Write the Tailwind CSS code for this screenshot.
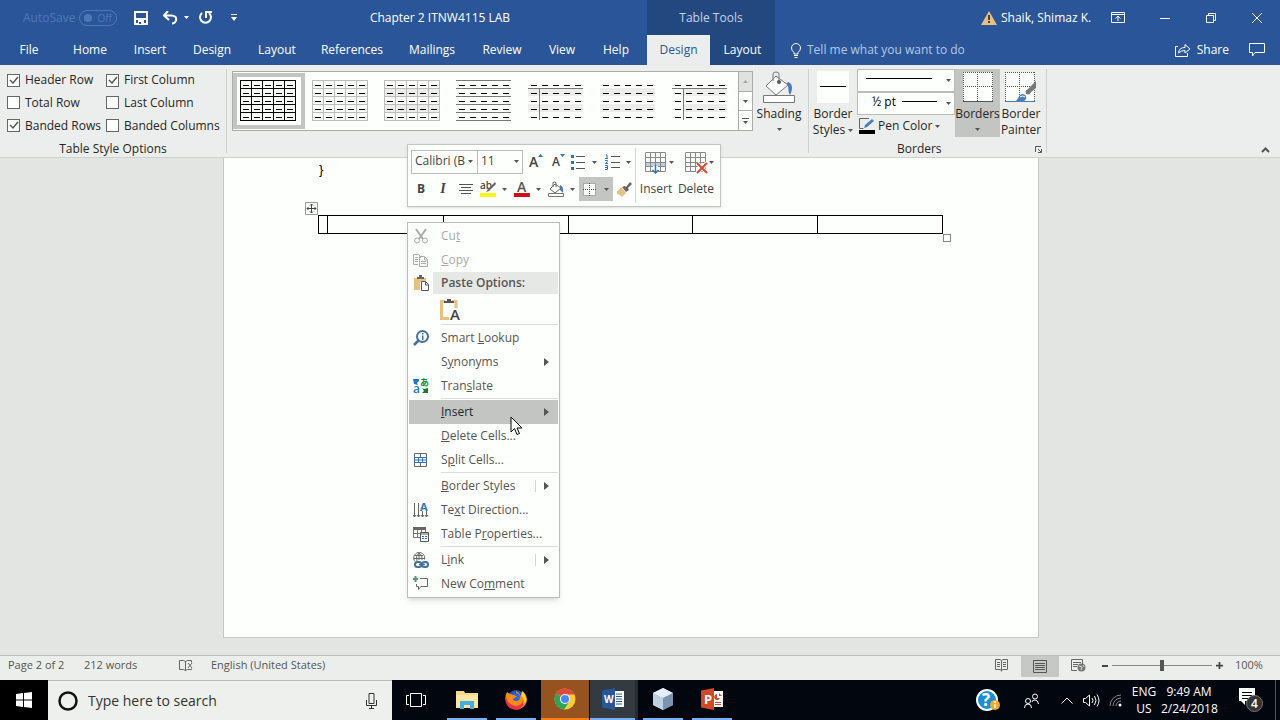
<!DOCTYPE html>
<html lang="en">

<head>
    <meta charset="UTF-8">
    <meta name="viewport" content="width=device-width, initial-scale=1.0">
    <title>Chapter 2 ITNW4115 LAB</title>
    <script src="https://cdn.jsdelivr.net/npm/@tailwindcss/browser@4"></script>
</head>

<body class="min-h-screen flex flex-col bg-[#e3e5e3] font-['Open_Sans','Noto_Sans',sans-serif] text-xs text-[#262626] whitespace-nowrap">

    <!-- Shared icons -->
    <svg class="hidden">
        <symbol id="caret" viewBox="0 0 5 3"><path d="M0 0h5L2.500 3z" fill="#555" /></symbol>
        <symbol id="arrow-right" viewBox="0 0 5 8"><path d="M0 0l5 4-5 4z" fill="#555" /></symbol>
        <symbol id="dashes" viewBox="0 0 56 41">
            <path d="M3 5.500h52M3 13.500h52M3 21.500h52M3 29.500h52M3 37.500h52" stroke="#000" stroke-dasharray="6 5" fill="none" />
        </symbol>
        <symbol id="grid" viewBox="0 0 56 41">
            <path d="M0 .5h56M0 8.500h56M0 16.500h56M0 24.500h56M0 32.500h56M0 40.500h56M.5 0v41M11.500 0v41M22.500 0v41M33.500 0v41M44.500 0v41M55.500 0v41" stroke="currentColor" fill="none" />
        </symbol>
        <symbol id="bucket" viewBox="0 0 32 33">
            <path d="M25 11c5 1 5 8 2 13-3-4 0-9-4-11z" fill="#4a7ebb" />
            <path d="M13 5L3 15l10 9 12-10z" fill="#fff" stroke="#777" />
            <path d="M10 10V3q0-2 3-2t3 2v8" fill="none" stroke="#777" />
            <circle cx="16" cy="11" r="2" fill="#555" />
            <path d="M.5 24.500h31v7H.5z" fill="#fff" stroke="#777" />
        </symbol>
        <symbol id="border-grid" viewBox="0 0 30 30">
            <path d="M0 0h30v30H0z" fill="#fdfffc" />
            <path d="M0 .5h30M0 29.500h30M.5 0v30M29.500 0v30M14.500 0v30M0 14.500h30" fill="none" stroke="#555" stroke-dasharray="1 1" />
        </symbol>
    </svg>

    <!-- Title bar -->
    <header class="bg-[#2a5699] text-white">
        <div class="flex h-[35px] items-center">
            <label class="flex w-[124px] items-center gap-1 pl-[23px] text-[#4d78b8]">AutoSave
                <button class="flex h-4 w-[38px] shrink-0 items-center gap-[5px] rounded-full border border-[#4d78b8] pl-1 text-[10px] leading-3"><span class="size-2 shrink-0 rounded-full bg-[#4d78b8]"></span>Off</button>
            </label>
            <div class="flex w-[204px] items-center pl-[10px]">
                <button aria-label="Save"><svg class="size-[14px]" viewBox="0 0 14 14"><path d="M1 1h12v12H1zM1 8h12" fill="none" stroke="#fff" stroke-width="2" /><path d="M4 9h6v4H4z" fill="#fff" /><path d="M5 11h2v2H5z" fill="#2a5699" /></svg></button>
                <button class="ml-[15px] flex items-center gap-[6px]" aria-label="Undo"><svg class="h-[14px] w-[15px]" viewBox="0 0 15 14"><path d="M5 0L1 4.500 6 9M1 4.500h7q6 0 5 5-1 3-4 3" fill="none" stroke="#fff" stroke-width="2" /></svg><svg class="h-[3px] w-[5px]" viewBox="0 0 5 3"><path d="M0 0h5L2.500 3z" fill="#fff" /></svg></button>
                <button class="ml-[9px]" aria-label="Repeat"><svg class="size-[15px]" viewBox="0 0 15 15"><path d="M4 3a5.500 5.500 0 1 0 7 0M8 8V2h6" fill="none" stroke="#fff" stroke-width="2" /></svg></button>
                <button class="ml-[18px]" aria-label="Customize"><svg class="h-[7px] w-[6px]" viewBox="0 0 6 7"><path d="M0 0h6v1H0zM0 3h6L3 7z" fill="#fff" /></svg></button>
            </div>
            <h1 class="w-[224px] text-center">Chapter 2 ITNW4115 LAB</h1>
            <div class="ml-[95px] flex h-full w-32 items-center justify-center bg-[#23487f] text-[#c3d2e9]">Table Tools</div>
            <div class="ml-auto flex items-center">
                <svg class="h-[14px] w-[16px]" viewBox="0 0 16 14"><path d="M8 0l8 14H0z" fill="#e8c07f" /><path d="M7 4h2v5H7zM7 10h2v2H7z" fill="#444" /></svg>
                <span class="ml-1 w-[110px]">Shaik, Shimaz K.</span>
                <button aria-label="Ribbon options"><svg class="h-[11px] w-[14px]" viewBox="0 0 14 11"><path d="M.5 .5h13v10H.5zM.5 2.500h13M7 9V4M4.500 6.500L7 4l2.500 2.500" fill="none" stroke="#fff" /></svg></button>
                <button class="ml-[35px]" aria-label="Minimize"><svg class="size-[10px]" viewBox="0 0 10 10"><path d="M0 5.500h10" stroke="#fff" /></svg></button>
                <button class="ml-9" aria-label="Restore"><svg class="size-[10px]" viewBox="0 0 10 10"><path d="M.5 2.500h7v7h-7zM2.500 2V.5h7v7H8" fill="none" stroke="#fff" /></svg></button>
                <button class="ml-9 mr-[18px]" aria-label="Close"><svg class="size-[10px]" viewBox="0 0 10 10"><path d="M0 0l10 10M10 0L0 10" stroke="#fff" /></svg></button>
            </div>
        </div>

        <!-- Tabs -->
        <nav class="flex h-[30px] items-stretch">
            <button class="w-[58px]">File</button>
            <button class="w-16">Home</button>
            <button class="w-14">Insert</button>
            <button class="w-[68px]">Design</button>
            <button class="w-[62px]">Layout</button>
            <button class="w-[88px]">References</button>
            <button class="w-[72px]">Mailings</button>
            <button class="w-[68px]">Review</button>
            <button class="w-[52px]">View</button>
            <button class="w-14">Help</button>
            <button class="ml-[3px] w-[63px] bg-[#eceeed] text-[#2a5699]">Design</button>
            <button class="w-[65px] bg-[#23487f]">Layout</button>
            <label class="flex items-center gap-[6px] pl-4">
                <svg class="h-[15px] w-[10px]" viewBox="0 0 10 15"><path d="M3 11V9.500Q.5 7.500.5 5a4.500 4.500 0 0 1 9 0Q9.500 7.500 7 9.500V11zM3 12.500h4M3.500 14.500h3" fill="none" stroke="#fff" /></svg>
                <input type="text" class="w-44 outline-none placeholder:text-[#b4c8e6] placeholder:opacity-100" placeholder="Tell me what you want to do">
            </label>
            <button class="ml-auto flex items-center gap-[6px]"><svg class="h-[14px] w-4" viewBox="0 0 16 14"><path d="M3 3.500H.5v10h12V10M3.500 10Q4 4.500 10 4.500V1.500l5 4.500-5 4V7.500Q6 7.500 3.500 10z" fill="none" stroke="#fff" /></svg>Share</button>
            <button class="ml-5 mr-[15px]" aria-label="Comments"><svg class="h-[14px] w-4" viewBox="0 0 16 14"><path d="M.5 .5h15v9H6L3.500 13V9.500h-3z" fill="none" stroke="#fff" /></svg></button>
        </nav>
    </header>

    <!-- Ribbon -->
    <section class="flex h-[93px] border-b border-[#cfd1cf] bg-[#eceeed] py-1">
        <div class="flex w-[227px] flex-col border-r border-[#cfd1cf]">
            <div class="grid h-[68px] shrink-0 grid-cols-[99px_1fr] pl-[7px]">
                <label class="flex items-center gap-[5px]"><span class="relative"><input type="checkbox" checked class="peer block size-[13px] appearance-none border border-[#666] bg-[#fdfffc]"><svg class="pointer-events-none absolute inset-0 hidden size-[13px] peer-checked:block" viewBox="0 0 13 13"><path d="M3 6l3 3 5-6" fill="none" stroke="#555" stroke-width="1.500" /></svg></span>Header Row</label>
                <label class="flex items-center gap-[5px]"><span class="relative"><input type="checkbox" checked class="peer block size-[13px] appearance-none border border-[#666] bg-[#fdfffc]"><svg class="pointer-events-none absolute inset-0 hidden size-[13px] peer-checked:block" viewBox="0 0 13 13"><path d="M3 6l3 3 5-6" fill="none" stroke="#555" stroke-width="1.500" /></svg></span>First Column</label>
                <label class="flex items-center gap-[5px]"><input type="checkbox" class="size-[13px] appearance-none border border-[#666] bg-[#fdfffc]">Total Row</label>
                <label class="flex items-center gap-[5px]"><input type="checkbox" class="size-[13px] appearance-none border border-[#666] bg-[#fdfffc]">Last Column</label>
                <label class="flex items-center gap-[5px]"><span class="relative"><input type="checkbox" checked class="peer block size-[13px] appearance-none border border-[#666] bg-[#fdfffc]"><svg class="pointer-events-none absolute inset-0 hidden size-[13px] peer-checked:block" viewBox="0 0 13 13"><path d="M3 6l3 3 5-6" fill="none" stroke="#555" stroke-width="1.500" /></svg></span>Banded Rows</label>
                <label class="flex items-center gap-[5px]"><input type="checkbox" class="size-[13px] appearance-none border border-[#666] bg-[#fdfffc]">Banded Columns</label>
            </div>
            <div class="text-center leading-6">Table Style Options</div>
        </div>

        <div class="flex w-[582px] border-r border-[#cfd1cf] pl-[5px]">
            <!-- Table styles gallery -->
            <div class="mt-[2px] flex h-[60px] w-[521px] border border-[#aaacaa] bg-[#fdfffc]">
                <button class="my-px flex w-[72px] border-4 border-[#c3c5c3] pt-[3px] pl-[3px]" aria-label="Table Grid"><svg class="h-[41px] w-14 text-black"><use href="#grid" /><use href="#dashes" /></svg></button>
                <button class="flex w-[72px] pt-2 pl-[7px]" aria-label="Table Grid Light"><svg class="h-[41px] w-14 text-[#bbb]"><use href="#grid" /><use href="#dashes" /></svg></button>
                <button class="flex w-[72px] pt-2 pl-[7px]" aria-label="Plain Table 1"><svg class="h-[41px] w-14 text-[#bbb]"><path d="M0 8h56v8H0zM0 24h56v8H0z" fill="#ededed" /><use href="#grid" /><use href="#dashes" /></svg></button>
                <button class="flex w-[72px] pt-2 pl-[7px]" aria-label="Plain Table 2"><svg class="h-[41px] w-14"><path d="M0 .5h55M0 8.500h55M0 16.500h55M0 24.500h55M0 32.500h55M0 40.500h55" stroke="#777" /><use href="#dashes" /></svg></button>
                <button class="flex w-[72px] pt-2 pl-[7px]" aria-label="Plain Table 3"><svg class="h-[41px] w-14"><path d="M0 8h55v8H0zM0 24h55v8H0z" fill="#ededed" /><path d="M0 8.500h55M11.500 8v32" stroke="#777" /><use href="#dashes" /></svg></button>
                <button class="flex w-[72px] pt-2 pl-[7px]" aria-label="Plain Table 4"><svg class="h-[41px] w-14"><path d="M0 8h55v8H0zM0 24h55v8H0z" fill="#ededed" /><use href="#dashes" /></svg></button>
                <button class="flex w-[73px] pt-2 pl-[7px]" aria-label="Plain Table 5"><svg class="h-[41px] w-14"><path d="M12 8h43v8H12zM12 24h43v8H12z" fill="#ededed" /><path d="M0 8.500h55M11.500 8v32" stroke="#777" /><use href="#dashes" /></svg></button>
                <div class="flex w-[14px] flex-col divide-y divide-[#aaacaa] border-l border-[#aaacaa]">
                    <button class="flex flex-1 items-center justify-center bg-[#e0e2e0]" aria-label="Up"><svg class="h-[3px] w-[5px]" viewBox="0 0 5 3"><path d="M0 3h5L2.500 0z" fill="#aaa" /></svg></button>
                    <button class="flex flex-1 items-center justify-center" aria-label="Down"><svg class="h-[3px] w-[5px]"><use href="#caret" /></svg></button>
                    <button class="flex flex-1 flex-col items-center justify-center gap-[2px]" aria-label="More"><span class="h-px w-[7px] bg-[#555]"></span><svg class="h-[3px] w-[5px]"><use href="#caret" /></svg></button>
                </div>
            </div>
            <button class="flex h-[69px] w-[52px] flex-col items-center pt-[2px] leading-4"><svg class="mb-[2px] h-[33px] w-8 shrink-0"><use href="#bucket" /></svg>Shading<svg class="mt-[6px] h-[3px] w-[5px]"><use href="#caret" /></svg></button>
        </div>

        <div class="flex w-[238px] flex-col border-r border-[#cfd1cf]">
            <div class="flex h-[68px] shrink-0">
                <button class="flex w-12 flex-col items-center pt-[2px] leading-4">
                    <svg class="mb-[3px] size-8 shrink-0 bg-[#fdfffc]"><path d="M3 15.500h26" stroke="#000" /></svg>
                    <span>Border</span>
                    <span class="flex items-center gap-[3px]">Styles <svg class="h-[3px] w-[5px]"><use href="#caret" /></svg></span>
                </button>
                <div class="flex w-[98px] flex-col">
                    <div class="relative h-[23px]"><select aria-label="Line Style" class="h-full w-full appearance-none border border-[#bbbdbb] bg-[#fdfffc]"><option></option></select>
                        <svg class="pointer-events-none absolute top-[9px] left-[9px] h-px w-[66px] bg-black"></svg><svg class="pointer-events-none absolute top-[10px] right-1 h-[3px] w-[5px]"><use href="#caret" /></svg></div>
                    <div class="relative h-[23px]"><select aria-label="Line Weight" class="h-full w-full appearance-none border border-[#bbbdbb] bg-[#fdfffc] pb-[3px] pl-[14px] text-black"><option>½ pt</option></select>
                        <svg class="pointer-events-none absolute top-[9px] left-[45px] h-px w-[35px] bg-black"></svg><svg class="pointer-events-none absolute top-[10px] right-1 h-[3px] w-[5px]"><use href="#caret" /></svg></div>
                    <button class="flex h-[22px] items-center gap-[3px] pl-[2px]"><svg class="size-4 shrink-0" viewBox="0 0 16 16"><path d="M10 .5H.5v10h4" fill="none" stroke="#666" /><path d="M5 10l1-3 7-6 2 2-7 6z" fill="#4a7ebb" /><path d="M0 12h16v4H0z" fill="#000" /></svg>Pen Color <svg class="h-[3px] w-[5px]"><use href="#caret" /></svg></button>
                </div>
                <button class="flex w-[45px] flex-col items-center bg-[#c3c5c3] pt-[3px] leading-4"><svg class="mb-1 size-[30px] shrink-0"><use href="#border-grid" /><path d="M0 29.500h30" stroke="#555" /></svg>Borders<svg class="mt-[6px] h-[3px] w-[5px]"><use href="#caret" /></svg></button>
                <button class="flex w-[42px] flex-col items-center pt-[3px] leading-4">
                    <svg class="mb-1 h-[30px] w-8 shrink-0" viewBox="0 0 32 30"><svg width="30" height="30"><use href="#border-grid" /></svg><path d="M0 29.500h30" stroke="#4a7ebb" /><path d="M31 9v7l-6 5-3-3z" fill="#777" /><circle cx="23" cy="20" r="2.500" fill="#777" /><path d="M9 30c5-2 4-8 9-8 5 1 4 8-2 8z" fill="#4a7ebb" /><path d="M15 25q3-2 5 0" stroke="#fff" fill="none" /></svg>
                    <span>Border</span><span>Painter</span>
                </button>
            </div>
            <div class="flex items-center justify-between pr-[4px] pl-[88px] leading-6">Borders
                <button aria-label="Borders settings"><svg class="size-[7px]" viewBox="0 0 7 7"><path d="M.5 6V.5H6M3 3l3 3M6.500 3v3.500H3" fill="none" stroke="#555" /></svg></button>
            </div>
        </div>
        <button class="mt-auto mr-[10px] ml-auto" aria-label="Collapse ribbon"><svg class="h-[6px] w-[9px]" viewBox="0 0 9 6"><path d="M1 5l3.500-3.500L8 5" fill="none" stroke="#555" stroke-width="2" /></svg></button>
    </section>

    <!-- Document -->
    <main class="flex flex-1 justify-center pr-[18px] pb-[17px]">
        <article class="relative w-[816px] border-x border-b border-[#c6c8c6] bg-[#fdfffc] px-[95px] pt-1">
            <p class="font-['Liberation_Sans',sans-serif] text-[13px] leading-4 text-black">}</p>
            <table class="mt-[37px] h-[19px] w-[625px] table-fixed border-collapse -ml-px">
                <tr>
                    <td class="w-[9px] border border-black"></td>
                    <td class="w-[116px] border border-black"></td>
                    <td class="w-[125px] border border-black"></td>
                    <td class="w-[124px] border border-black"></td>
                    <td class="w-[125px] border border-black"></td>
                    <td class="border border-black"></td>
                </tr>
            </table>
            <!-- table handles -->
            <svg class="absolute top-[44px] left-[81px] size-[13px]" viewBox="0 0 13 13"><path d="M.5 .5h12v12H.5z" fill="#fff" stroke="#999" /><path d="M6.500 2v9M2 6.500h9M5 3.500l1.500-1.500L8 3.500M5 9.500L6.500 11 8 9.500M3.500 5L2 6.500 3.500 8M9.500 5L11 6.500 9.500 8" fill="none" stroke="#444" /></svg>
            <span class="absolute top-[76px] left-[719px] size-2 border border-[#888] bg-white"></span>

            <!-- Mini toolbar -->
            <div class="absolute -top-[14px] left-[183px] flex h-[63px] w-[314px] border border-[#c3c5c3] bg-[#fdfffc] text-[#444] shadow-sm">
                <div class="w-[227px] pt-[5px]">
                    <div class="flex h-6 items-center pl-[3px]">
                        <div class="relative"><select aria-label="Font" class="block h-6 w-[67px] appearance-none border border-[#bbbdbb] pb-[2px] pl-[3px]"><option>Calibri (B</option></select><svg class="pointer-events-none absolute top-[10px] right-[5px] h-[3px] w-[5px]"><use href="#caret" /></svg></div>
                        <div class="relative -ml-px"><select aria-label="Font Size" class="block h-6 w-[46px] appearance-none border border-[#bbbdbb] pb-[2px] pl-[3px]"><option>11</option></select><svg class="pointer-events-none absolute top-[10px] right-[4px] h-[3px] w-[5px]"><use href="#caret" /></svg></div>
                        <button class="ml-[6px] flex w-5 text-sm leading-6 font-semibold">A<svg class="mt-1 h-[3px] w-[5px]" viewBox="0 0 5 3"><path d="M0 3h5L2.500 0z" fill="#2e75b6" /></svg></button>
                        <button class="ml-[3px] flex w-4 text-xs leading-6 font-semibold">A<svg class="mt-1 h-[3px] w-[5px]" viewBox="0 0 5 3"><path d="M0 0h5L2.500 3z" fill="#2e75b6" /></svg></button>
                        <button class="ml-[3px] flex items-center gap-[7px]" aria-label="Bullets"><svg class="h-4 w-[14px]" viewBox="0 0 14 16"><path d="M0 1h3v3H0zM0 7h3v3H0zM0 13h3v3H0z" fill="#2e75b6" /><path d="M5 2.500h9M5 8.500h9M5 14.500h9" stroke="#555" /></svg><svg class="h-[3px] w-[5px]"><use href="#caret" /></svg></button>
                        <button class="ml-2 flex items-center gap-[6px]" aria-label="Numbering"><svg class="h-4 w-[15px]" viewBox="0 0 15 16"><path d="M1 1h1v3M0 4.500h3M0 6.500h2.500v1L.5 9.500H3M0 11.500h2.500v4H0M0 13.500h2.500" fill="none" stroke="#2e75b6" /><path d="M6 2.500h9M6 8.500h9M6 13.500h9" stroke="#555" /></svg><svg class="h-[3px] w-[5px]"><use href="#caret" /></svg></button>
                    </div>
                    <div class="mt-[3px] flex h-6 items-center pl-[2px]">
                        <button class="w-[22px] font-bold">B</button>
                        <button class="w-[22px] font-['Liberation_Serif',serif] text-sm font-semibold italic">I</button>
                        <button class="ml-[5px] w-[15px]" aria-label="Center"><svg class="h-[11px] w-[14px]" viewBox="0 0 14 11"><path d="M0 .5h14M2 3.500h10M0 6.500h14M2 9.500h10" stroke="#555" /></svg></button>
                        <button class="ml-[6px] flex items-center gap-[6px]" aria-label="Highlight"><svg class="size-4 overflow-visible" viewBox="0 0 16 16"><text x="0" y="8" font-size="10" font-weight="600" fill="#444">ab</text><path d="M15 1l1 2-7 7-3 1 2-3z" fill="#666" /><path d="M0 12h16v4H0z" fill="#fbf51b" /></svg><svg class="h-[3px] w-[5px]"><use href="#caret" /></svg></button>
                        <button class="ml-[7px] flex items-center gap-[6px]" aria-label="Font Color"><svg class="size-4 overflow-visible" viewBox="0 0 16 16"><text x="3" y="11" font-size="14" font-weight="600" fill="#555">A</text><path d="M0 12h16v4H0z" fill="#d40f14" /></svg><svg class="h-[3px] w-[5px]"><use href="#caret" /></svg></button>
                        <button class="ml-[7px] flex items-center gap-[6px]" aria-label="Shading"><svg class="size-4" viewBox="0 0 16 16"><path d="M12 4q4 1 3 8-1-1-3-3z" fill="#4a7ebb" /><path d="M7 3L2 8l5 4 6-5zM5 6V1.500Q6 .5 8 1.500V6" fill="none" stroke="#666" /><path d="M.5 12.500h15v3H.5z" fill="#fff" stroke="#777" /></svg><svg class="h-[3px] w-[5px]"><use href="#caret" /></svg></button>
                        <button class="ml-1 flex h-6 w-[34px] items-center gap-2 bg-[#c3c5c3] pl-1" aria-label="Borders"><svg class="size-[13px]" viewBox="0 0 13 13"><path d="M0 0h13v13H0z" fill="#fff" /><path d="M.5 .5h12v12H.5zM6.500 0v13M0 6.500h13" fill="none" stroke="#555" stroke-dasharray="1 1" /></svg><svg class="h-[3px] w-[5px]"><use href="#caret" /></svg></button>
                        <button class="ml-1" aria-label="Format Painter"><svg class="size-[15px]" viewBox="0 0 15 15"><path d="M13 0l2 2-4 4 1 2-3 2-4-5 3-1 1 1z" fill="#666" /><path d="M4 5l5 6-4 4q-2-3-5-3V9q2-1 4-4z" fill="#e8c07f" /></svg></button>
                    </div>
                </div>
                <div class="my-[3px] flex flex-1 border-l border-[#d5d7d5] leading-4">
                    <button class="flex w-10 flex-col items-center justify-between pt-[3px] pb-[6px]"><span class="flex items-center gap-[3px] pl-[6px]"><svg class="h-[23px] w-[21px]" viewBox="0 0 21 23"><path d="M0 11h21v5H0z" fill="#b9cfe8" /><path d="M.5 1.500h20v19H.5zM.5 6.500h20M.5 11.500h20M.5 15.500h20M5.500 1v19M10.500 1v19M15.500 1v19" fill="none" stroke="#888" /><path d="M8 15h5v8H8z" fill="#fff" /><path d="M10.500 14v8M7.500 19l3 3 3-3" fill="none" stroke="#2e75b6" stroke-width="1.500" /></svg><svg class="h-[3px] w-[5px]"><use href="#caret" /></svg></span>Insert</button>
                    <button class="flex w-10 flex-col items-center justify-between pt-[3px] pb-[6px]"><span class="flex items-center gap-px pl-[6px]"><svg class="h-[23px] w-[23px]" viewBox="0 0 23 23"><path d="M.5 1.500h20v19H.5zM.5 6.500h20M.5 11.500h20M.5 15.500h20M5.500 1v19M10.500 1v19M15.500 1v19" fill="none" stroke="#888" /><path d="M12 12l10 10M22 12L12 22" stroke="#fff" stroke-width="4" /><path d="M12 12l10 10M22 12L12 22" stroke="#cf4b32" stroke-width="2" /></svg><svg class="h-[3px] w-[5px]"><use href="#caret" /></svg></span>Delete</button>
                </div>
            </div>

            <!-- Context menu -->
            <div class="absolute top-16 left-[183px] flex w-[153px] flex-col border border-[#bbbdbb] bg-[#fdfffc] p-px text-[#555] shadow-md">
                <button class="flex h-6 items-center pl-[4px] text-[#aaa]"><svg class="mr-3 size-4" viewBox="0 0 16 16"><path d="M3 1l7 10M13 1L6 11" stroke="#aaa" stroke-width="2" /><circle cx="4" cy="12.500" r="2.500" fill="none" stroke="#aaa" /><circle cx="12" cy="12.500" r="2.500" fill="none" stroke="#aaa" /></svg><span>Cu<u>t</u></span></button>
                <button class="flex h-6 items-center pl-[4px] text-[#aaa]"><svg class="mr-3 size-4" viewBox="0 0 16 16"><path d="M5 12.500H.5v-10h5l2 2V6M2 5.500h3M2 7.500h3M2 9.500h3M6.500 4.500h5l3 3v7h-8zM11.500 5v3h3M8 9.500h5M8 11.500h5" fill="none" stroke="#aaa" /></svg><span><u>C</u>opy</span></button>
                <div class="flex h-[22px] items-center pl-[4px] font-semibold"><svg class="mr-1 size-4 shrink-0" viewBox="0 0 16 16"><path d="M1 3h12v4H7v8H1z" fill="#e8c07f" /><path d="M4 3V2h2V0h3v2h2v2H4z" fill="#666" /><path d="M8.500 6.500h4l3 3v6h-7zM12.500 7v3h3" fill="#fff" stroke="#555" /></svg><span class="flex h-full flex-1 items-center bg-[#e6e8e6] pl-2">Paste Options:</span></div>
                <button class="flex h-[30px] items-center pl-[31px]" aria-label="Keep Text Only"><svg class="h-[23px] w-[21px] overflow-visible" viewBox="0 0 21 23"><path d="M5 3.500H1.500v17H9M12 3.500h4V10" fill="none" stroke="#e8c07f" stroke-width="3" /><path d="M4 5V3h3V1h4v2h3v2z" fill="#555" /><text x="10" y="22" font-size="15" font-weight="600" fill="#444">A</text></svg></button>
                <div class="mb-px ml-8 h-px bg-[#dadcdf]"></div>
                <button class="flex h-6 items-center pl-[4px]"><svg class="mr-3 size-4" viewBox="0 0 16 16"><circle cx="9.500" cy="6.500" r="5.500" fill="none" stroke="#41719c" stroke-width="2" /><path d="M5.500 10.500L1 15" stroke="#41719c" stroke-width="2.500" /><path d="M9 3h1.500v1.500H9zM9 5.500h1.500V10H9z" fill="#41719c" /></svg><span>Smart <u>L</u>ookup</span></button>
                <button class="flex h-6 items-center pr-[9px] pl-8"><span>S<u>y</u>nonyms</span><svg class="ml-auto h-2 w-[5px]"><use href="#arrow-right" /></svg></button>
                <button class="flex h-6 items-center pl-[4px]"><svg class="mr-3 size-4 overflow-visible" viewBox="0 0 16 16"><path d="M0 1h6v2L4 5l1 2-4-1z" fill="#2078c8" /><text x="0" y="15" font-size="12" font-weight="600" fill="#2078c8">a</text><text x="7" y="8" font-size="9" font-weight="700" fill="#1d8a34" font-family="Noto Sans CJK JP">あ</text><path d="M9 10l2 1 4-1v5H9l2-2z" fill="#1d7a2c" /></svg><span>Tran<u>s</u>late</span></button>
                <div class="mb-px ml-8 h-px bg-[#dadcdf]"></div>
                <button class="flex h-6 items-center bg-[#c3c5c3] pr-[9px] pl-8 text-[#262626]"><span><u>I</u>nsert</span><svg class="ml-auto h-2 w-[5px]"><use href="#arrow-right" /></svg></button>
                <button class="flex h-6 items-center pl-8"><span><u>D</u>elete Cells...</span></button>
                <button class="flex h-6 items-center pl-[4px]"><svg class="mr-3 size-4" viewBox="0 0 16 16"><path d="M1.500 1.500h12v13h-12zM7.500 1v4M7.500 11v4" fill="none" stroke="#666" /><path d="M1 5.500h13M1 10.500h13M1 8h13M5.500 5v6M9.500 5v6" fill="none" stroke="#2e75b6" /></svg><span>S<u>p</u>lit Cells...</span></button>
                <div class="mb-px ml-8 h-px bg-[#dadcdf]"></div>
                <button class="flex h-6 items-center pr-[9px] pl-8"><span><u>B</u>order Styles</span><span class="mr-[8px] ml-auto h-3 w-px bg-[#d5d7d5]"></span><svg class="h-2 w-[5px]"><use href="#arrow-right" /></svg></button>
                <button class="flex h-6 items-center pl-[4px]"><svg class="mr-3 size-4 overflow-visible" viewBox="0 0 16 16"><path d="M1.500 1v14M5.500 1v14M9.500 9v6M13.500 9v6M0 13l1.500 2L3 13M4 13l1.500 2L7 13M8 13l1.500 2 1.500-2M12 13l1.500 2 1.500-2" fill="none" stroke="#666" /><text x="7" y="9" font-size="11" font-weight="700" fill="#2e75b6">A</text></svg><span>Te<u>x</u>t Direction...</span></button>
                <button class="flex h-6 items-center pl-[4px]"><svg class="mr-3 size-4" viewBox="0 0 16 16"><path d="M0 1h13v3H0z" fill="#666" /><path d="M.5 3v8.500H7M4.500 4v8M8.500 4v2M12.500 4v2M0 7.500h7" fill="none" stroke="#777" /><path d="M7.500 6.500h8v9h-8zM7 8h9" fill="#fff" stroke="#555" /><path d="M9 10h2v1H9zM9 12h2v1H9z" fill="#2e75b6" /><path d="M12 10.500h2M12 12.500h2" stroke="#2e75b6" /></svg><span>Table P<u>r</u>operties...</span></button>
                <div class="mb-px ml-8 h-px bg-[#dadcdf]"></div>
                <button class="flex h-6 items-center pr-[9px] pl-[4px]"><svg class="mr-3 size-4" viewBox="0 0 16 16"><path d="M2 9.500A5.500 5.500 0 1 1 11.500 7.500M.5 6.500H12M2 3.500h8M6 1v7M6 1Q2 4 4 9M6 1q4 3 3 7" fill="none" stroke="#666" /><rect x="2" y="10" width="6.500" height="5" rx="2.500" fill="none" stroke="#41719c" stroke-width="2" /><rect x="9" y="10" width="6" height="5" rx="2.500" fill="none" stroke="#41719c" stroke-width="2" /><path d="M6 12.500h6" stroke="#41719c" stroke-width="1.500" /></svg><span>L<u>i</u>nk</span><span class="mr-[8px] ml-auto h-3 w-px bg-[#d5d7d5]"></span><svg class="h-2 w-[5px]"><use href="#arrow-right" /></svg></button>
                <button class="flex h-6 items-center pl-[4px]"><svg class="mr-3 size-4" viewBox="0 0 16 16"><path d="M7 2.500h7.500v8H8l-2.500 3v-3h-2V8" fill="none" stroke="#666" /><path d="M2.500 0v6M0 3h5" stroke="#4f9a78" stroke-width="2" /></svg><span>New Co<u>m</u>ment</span></button>
            </div>

            <!-- Mouse pointer -->
            <svg class="absolute top-[258px] left-[286px] h-[20px] w-[13px]" viewBox="0 0 13 20"><path d="M1 1v15l3.500-3.500L7 18.500l2.500-1L7 12h5z" fill="#fff" stroke="#000" /></svg>
        </article>
    </main>

    <!-- Status bar -->
    <footer class="flex h-[25px] items-center border-t border-[#b9bbb9] bg-[#eceeeb] pb-[5px] pl-2 text-[11px] text-[#555]">
        <span class="w-[76px]">Page 2 of 2</span>
        <span class="w-[95px]">212 words</span>
        <svg class="mr-[18px] h-[13px] w-[14px]" viewBox="0 0 14 13"><path d="M6.500 11.500L4.500 10.500h-4v-9h4l2 1zv-9l2-1h4v2M6.500 11.500l2-1h4v-1M9 4l4 5M13 4L9 9" fill="none" stroke="#666" /></svg>
        <span>English (United States)</span>
        <div class="ml-auto flex h-full items-center">
            <button aria-label="Read Mode"><svg class="h-[13px] w-[13px]" viewBox="0 0 13 13"><path d="M6.500 12.500V1.500L5 .5H.5v10H5l1.500 1 1.500-1h4.500V.5H8l-1.500 1M2 3.500h3M2 5.500h3M2 7.500h3M8 3.500h3M8 5.500h3M8 7.500h3" fill="none" stroke="#666" /></svg></button>
            <button class="ml-[13px] flex h-[21px] w-[38px] items-center justify-center self-start bg-[#c6c8c6]" aria-label="Print Layout"><svg class="h-[13px] w-[14px]" viewBox="0 0 14 13"><path d="M.5 .5h13v12H.5zM2 3.500h10M2 5.500h10M2 7.500h10M2 9.500h10" fill="none" stroke="#555" /></svg></button>
            <button class="ml-3" aria-label="Web Layout"><svg class="h-[13px] w-[15px]" viewBox="0 0 15 13"><path d="M6 11.500H.5V.5h11V5M2 3.500h8M2 5.500h5M2 7.500h4" fill="none" stroke="#666" /><circle cx="10.500" cy="8.500" r="4" fill="#777" /><path d="M8 7l3 1-1 3M12 6l1 2" stroke="#ddd" fill="none" /></svg></button>
            <button class="ml-4" aria-label="Zoom Out"><svg class="size-[6px]"><path d="M0 3h6" stroke="#444" stroke-width="2" /></svg></button>
            <input type="range" aria-label="Zoom" class="mx-1 h-3 w-[100px] appearance-none bg-linear-to-r from-[#888] to-[#888] bg-size-[100%_1px] bg-center bg-no-repeat [&::-webkit-slider-thumb]:h-[11px] [&::-webkit-slider-thumb]:w-1 [&::-webkit-slider-thumb]:appearance-none [&::-webkit-slider-thumb]:bg-[#555]">
            <button aria-label="Zoom In"><svg class="size-[7px]" viewBox="0 0 8 8"><path d="M0 4h8M4 0v8" stroke="#444" stroke-width="2" /></svg></button>
            <span class="w-[57px] pl-3">100%</span>
        </div>
    </footer>

    <!-- Taskbar -->
    <div class="flex h-10 items-stretch bg-[#02060f] text-white">
        <button class="flex w-12 items-center justify-center bg-black" aria-label="Start"><svg class="size-4" viewBox="0 0 16 16"><path d="M0 2l7-1v6.500H0zM8 1l8-1v7.500H8zM0 8.500h7V15l-7-1zM8 8.500h8V16l-8-1z" fill="#fff" /></svg></button>
        <label class="flex w-[344px] items-center border-t border-[#b9bbb9] bg-[#eef0ee] pl-[10px]">
            <svg class="size-5" viewBox="0 0 20 20"><circle cx="10" cy="10" r="8.500" fill="none" stroke="#111" stroke-width="2.500" /></svg>
            <input type="text" class="ml-[10px] flex-1 text-sm outline-none placeholder:text-[#333] placeholder:opacity-100" placeholder="Type here to search">
            <svg class="mr-[15px] h-4 w-[11px]" viewBox="0 0 11 16"><path d="M3 .5h5v10H3zM.5 7v5.500h10V7M5.500 12.500v3M3 15.500h5" fill="none" stroke="#333" /></svg>
        </label>
        <button class="mr-[3px] flex w-12 items-center justify-center" aria-label="Task View"><svg class="h-[14px] w-5" viewBox="0 0 20 14"><path d="M4.500 .5h11v13h-11zM3 2.500H.5v9H3M17 2.500h2.500v9H17" fill="none" stroke="#fff" /></svg></button>
        <div class="flex gap-px">
            <button class="flex w-12 flex-col items-center" aria-label="File Explorer"><svg class="my-auto h-[19px] w-[22px]" viewBox="0 0 22 19"><path d="M0 1h8l1 2h13v15H0z" fill="#f4d98a" /><path d="M0 5h22v13H0z" fill="#fbe6a2" /><path d="M4 11h14v8h-4v-4H8v4H4z" fill="#45aee0" /></svg><span class="h-[2px] w-10 bg-[#76b0f0]"></span></button>
            <button class="flex w-12 flex-col items-center" aria-label="Firefox"><svg class="my-auto size-[22px]" viewBox="0 0 22 22"><circle cx="11" cy="11" r="9" fill="#1f55b8" /><path d="M2 4q-4 8 1 13 5 6 12 4 7-3 7-10-1-6-5-8 1 4-1 6-1-4-5-6 1 4-3 4-4-1-6-3z" fill="#ff8a16" /><path d="M1 9q2 8 10 9 7-1 8-8 2 8-5 11-8 2-12-4-2-4-1-8z" fill="#e8344a" /><path d="M17 3q5 5 4 10l-3 4q2-6-2-9z" fill="#ffd332" /><circle cx="11" cy="9" r="4" fill="#3268d0" /><path d="M5 7q4-1 7 2-3 0-4 3-3-1-3-5z" fill="#ff8a16" /></svg><span class="h-[2px] w-10 bg-[#76b0f0]"></span></button>
            <button class="flex w-12 flex-col items-center bg-[#965320]" aria-label="Chrome"><svg class="my-auto size-[22px]" viewBox="0 0 22 22"><circle cx="11" cy="11" r="10.500" fill="#fbcd3a" /><path d="M11 11L2 5.500A10.500 10.500 0 0 1 20.500 6.500H11z" fill="#dd4b3e" /><path d="M2 5.500A10.500 10.500 0 0 0 10 21.500L15 14l-4-3z" fill="#2ea35a" /><circle cx="11" cy="11" r="5" fill="#fff" /><circle cx="11" cy="11" r="4" fill="#4a87ee" /></svg><span class="h-[2px] w-full bg-[#ff7b13]"></span></button>
            <button class="flex w-12 flex-col items-center border-r-[3px] border-[#232b33] bg-[#333a40]" aria-label="Word"><svg class="my-auto size-[22px]" viewBox="0 0 22 22"><path d="M12 3h10v16H12z" fill="#fff" /><path d="M14 6h6M14 8.500h6M14 11h6M14 13.500h6M14 16h6" stroke="#2a5699" /><path d="M0 2.500L13 0v22L0 19.500z" fill="#2a5699" /><text x="2" y="15" font-size="10" font-weight="700" fill="#fff">W</text></svg><span class="h-[2px] w-full bg-[#76b0f0]"></span></button>
            <button class="flex w-12 flex-col items-center" aria-label="NetBeans"><svg class="my-auto size-[22px]" viewBox="0 0 22 22"><path d="M11 0l10 5v12l-10 5L1 17V5z" fill="#9fb5cb" /><path d="M11 0l10 5-10 5L1 5z" fill="#e6eff8" /><path d="M11 10l10-5v12l-10 5z" fill="#7c94b0" /><path d="M1 5l10 5v12L1 17z" fill="#bfd0e2" /></svg><span class="h-[2px] w-10 bg-[#76b0f0]"></span></button>
            <button class="flex w-12 flex-col items-center" aria-label="PowerPoint"><svg class="my-auto size-[22px]" viewBox="0 0 22 22"><path d="M12 3h10v16H12z" fill="#fff" /><path d="M14 14.500h6M14 16.500h6" stroke="#d24726" /><path d="M16 6a3 3 0 1 0 3 4h-3z" fill="#d24726" /><path d="M18 5v3h3z" fill="#d24726" /><path d="M0 2.500L13 0v22L0 19.500z" fill="#d24726" /><text x="3" y="16" font-size="13" font-weight="700" fill="#fff">P</text></svg><span class="h-[2px] w-10 bg-[#76b0f0]"></span></button>
        </div>
        <div class="ml-auto flex items-center">
            <button aria-label="Help"><svg class="size-6 overflow-visible" viewBox="0 0 24 24"><circle cx="11" cy="12" r="10" fill="#1b8fd0" stroke="#fff" stroke-width="2" /><text x="6" y="18" font-size="17" font-weight="700" fill="#fff">?</text><circle cx="19" cy="17" r="5" fill="#f0a828" /><path d="M19 16v4M19 13v2" stroke="#fff" stroke-width="1.500" /></svg></button>
            <button class="ml-6" aria-label="People"><svg class="size-[15px]" viewBox="0 0 15 15"><path d="M.5 15q0-4 3.500-4t3.500 4M8 9q0-2 3-2t3.500 4" fill="none" stroke="#fff" /><circle cx="4" cy="8" r="2.500" fill="none" stroke="#fff" /><circle cx="11" cy="3.500" r="2.500" fill="none" stroke="#fff" /></svg></button>
            <button class="ml-[22px]" aria-label="Show hidden icons"><svg class="h-[7px] w-3" viewBox="0 0 12 7"><path d="M.5 6.500L6 1l5.500 5.500" fill="none" stroke="#fff" /></svg></button>
            <button class="ml-[10px]" aria-label="Volume"><svg class="h-[15px] w-[17px]" viewBox="0 0 17 15"><path d="M.5 5.500h2L6.500 2v11L2.500 9.500h-2zM9 5q2 2.500 0 5M11.500 3q3 4.500 0 9M14 1.500q4 6 0 12" fill="none" stroke="#fff" /></svg></button>
            <button class="ml-[9px]" aria-label="Network"><svg class="h-[13px] w-[13px]" viewBox="0 0 13 13"><path d="M1 12A11 11 0 0 1 12 1M4 12a8 8 0 0 1 8-8M7 12a5 5 0 0 1 5-5" fill="none" stroke="#888" /><circle cx="11" cy="11" r="1.500" fill="#fff" /></svg></button>
            <div class="ml-[5px] w-[34px] text-center leading-[17px]">ENG<br>US</div>
            <div class="w-14 text-center leading-[17px]">9:49 AM<br>2/24/2018</div>
            <button class="ml-[22px]" aria-label="Notifications"><svg class="size-6 overflow-visible" viewBox="0 0 24 24"><path d="M0 0h16v13H6v4l-4-4H0z" fill="#fff" /><path d="M3 4.500h10M3 7.500h10M3 10.500h6" stroke="#02060f" /><circle cx="15.500" cy="15.500" r="8" fill="#333" stroke="#777" /><text x="12" y="20" font-size="12" font-weight="600" fill="#fff">4</text></svg></button>
            <span class="ml-3 h-full w-[5px] border-l border-[#555]"></span>
        </div>
    </div>
</body>

</html>
